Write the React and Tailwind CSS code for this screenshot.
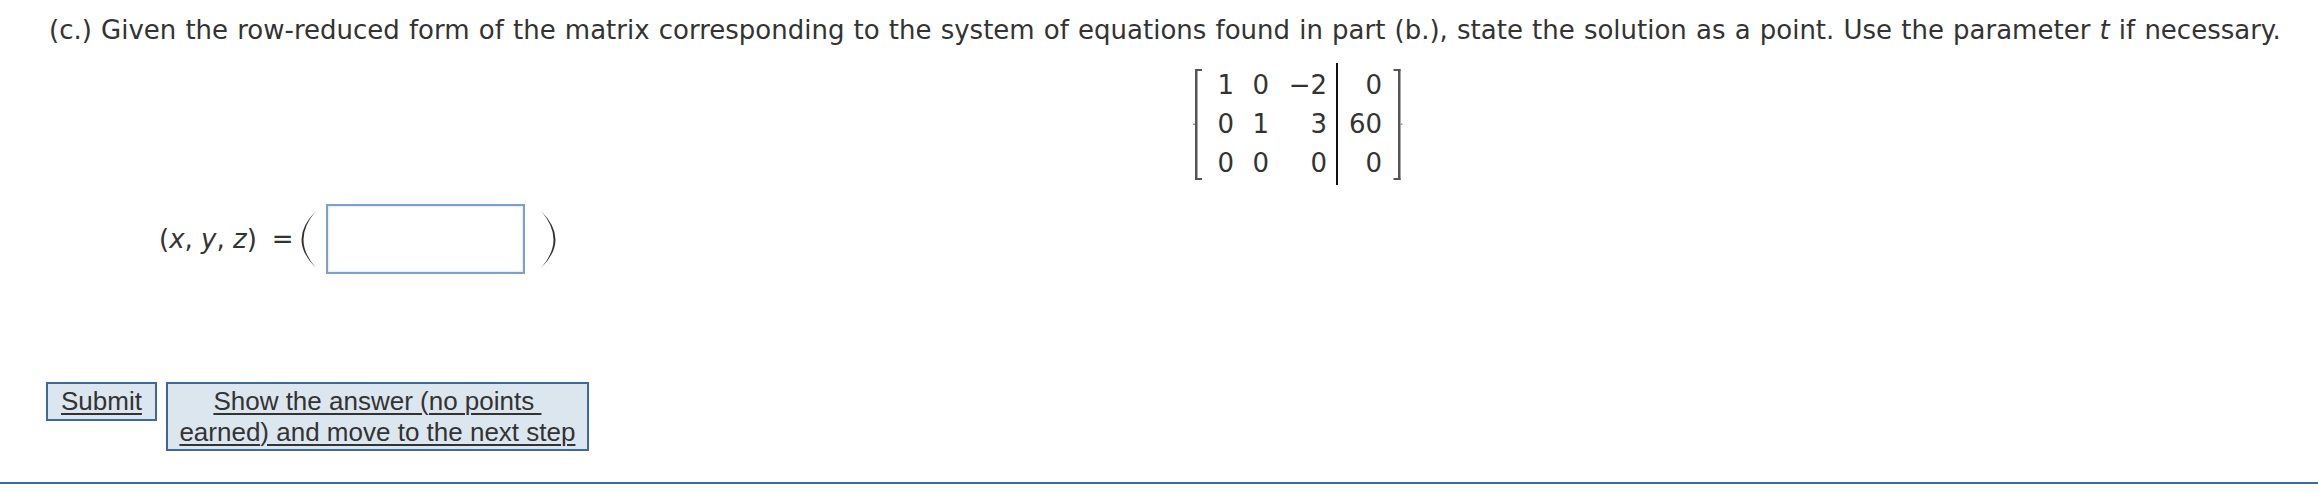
import React from "react";

function LeftBracket() {
  return (
    <svg width="10" height="111" viewBox="0 0 10 111" className="block">
      <rect x="2" y="0" width="2.5" height="111" fill="#555" />
      <rect x="2" y="0" width="7" height="2" fill="#555" />
      <rect x="2" y="109" width="7" height="2" fill="#555" />
      <rect x="0" y="54.5" width="2" height="1.5" fill="#999" />
    </svg>
  );
}

function RightBracket() {
  return (
    <svg width="11" height="111" viewBox="0 0 11 111" className="block">
      <rect x="6" y="0" width="2.5" height="111" fill="#555" />
      <rect x="1.5" y="0" width="7" height="2" fill="#555" />
      <rect x="1.5" y="109" width="7" height="2" fill="#555" />
      <rect x="8.5" y="54.5" width="2" height="1.5" fill="#999" />
    </svg>
  );
}

function OpenParen() {
  return (
    <svg width="17" height="57" viewBox="0 0 17 57" className="block">
      <path d="M15 0 Q -14 28.5 15 57 Q -10 28.5 15 0 Z" fill="#333" />
    </svg>
  );
}

function CloseParen() {
  return (
    <svg width="17" height="57" viewBox="0 0 17 57" className="block">
      <path d="M2 0 Q 31 28.5 2 57 Q 27 28.5 2 0 Z" fill="#333" />
    </svg>
  );
}

const rows = [
  ["1", "0", "\u22122", "0"],
  ["0", "1", "3", "60"],
  ["0", "0", "0", "0"],
];

export default function App() {
  return (
    <div className="w-[2318px] h-[492px] bg-white text-[#333] font-['DejaVu_Sans',sans-serif]">
      <p className="pl-[49px] pt-[15px] text-[26px] leading-[31px] [word-spacing:0.9px] whitespace-nowrap">
        (c.) Given the row-reduced form of the matrix corresponding to the system of equations found in part (b.), state the solution as a point. Use the parameter <i>t</i> if necessary.
      </p>

      <div className="flex items-center ml-[1193px] mt-[17px] h-[122px] text-[26px]">
        <LeftBracket />
        <div className="flex flex-col">
          {rows.map((r, i) => (
            <div key={i} className="flex h-[39px] leading-[39px]">
              <div className="w-[31px] text-right">{r[0]}</div>
              <div className="w-[35px] text-right">{r[1]}</div>
              <div className="w-[58px] text-right">{r[2]}</div>
            </div>
          ))}
        </div>
        <div className="ml-[9px] w-[2px] h-[122px] bg-[#111]" />
        <div className="flex flex-col">
          {rows.map((r, i) => (
            <div key={i} className="h-[39px] leading-[39px] w-[44px] text-right">
              {r[3]}
            </div>
          ))}
        </div>
        <div className="ml-[10px]">
          <RightBracket />
        </div>
      </div>

      <div className="flex items-center ml-[159px] mt-[19px] h-[70px] text-[26px]">
        <span>
          (<i>x</i>, <i>y</i>, <i>z</i>)
        </span>
        <span className="ml-[15px]">=</span>
        <div className="ml-[7px]">
          <OpenParen />
        </div>
        <input
          type="text"
          className="ml-[8px] w-[199px] h-[70px] border-2 border-[#7d9fc8] bg-white shadow-[inset_0_0_3px_rgba(125,159,200,0.4)] outline-none"
        />
        <div className="ml-[14px]">
          <CloseParen />
        </div>
      </div>

      <div className="flex items-start gap-[9px] ml-[46px] mt-[108px] font-['Liberation_Sans',Arial,sans-serif] text-[26px] leading-[31px]">
        <button className="h-[39px] px-[13px] border-2 border-[#41689a] bg-[#dce6ef] text-[#333] underline decoration-2 underline-offset-[3px]">
          Submit
        </button>
        <button className="w-[423px] h-[69px] px-[10px] border-2 border-[#41689a] bg-[#dce6ef] text-[#333] text-center underline decoration-2 underline-offset-[3px]">
          Show the answer (no points&nbsp;
          <br />
          earned) and move to the next step
        </button>
      </div>

      <div className="mt-[31px] h-[2px] w-full bg-[#3f6aa0]" />
    </div>
  );
}
